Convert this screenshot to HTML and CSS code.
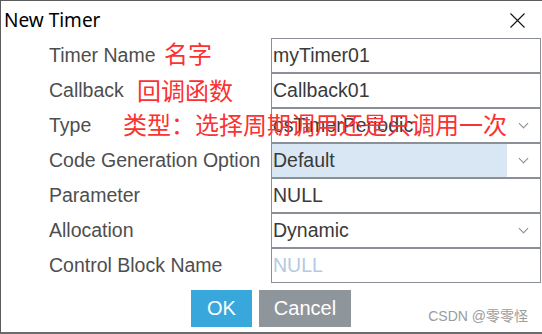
FILE: index.html
```html
<!DOCTYPE html>
<html lang="en">
  <head>
    <meta charset="UTF-8" />
    <title>New Timer</title>
    <link rel="stylesheet" href="styles.css">
  </head>
  <body>
    <div class="dialog">
      <div class="titlebar">
        <span class="title">New Timer</span>
        <svg class="close" width="15" height="15" viewBox="0 0 15 15">
          <path d="M0.5 0.5 L14.5 14.5 M14.5 0.5 L0.5 14.5" stroke="#111" stroke-width="1.1" fill="none" />
        </svg>
      </div>

      <div class="form">
        <label>Timer Name</label>
        <div class="field">myTimer01</div>

        <label>Callback</label>
        <div class="field">Callback01</div>

        <label>Type</label>
        <div class="field select">
          <span class="value">osTimerPeriodic</span>
          <span class="arrow"></span>
        </div>

        <label>Code Generation Option</label>
        <div class="field select">
          <span class="value selected">Default</span>
          <span class="arrow"></span>
        </div>

        <label>Parameter</label>
        <div class="field">NULL</div>

        <label>Allocation</label>
        <div class="field select">
          <span class="value">Dynamic</span>
          <span class="arrow"></span>
        </div>

        <label>Control Block Name</label>
        <div class="field placeholder">NULL</div>
      </div>

      <div class="actions">
        <button class="btn btn-ok">OK</button>
        <button class="btn btn-cancel">Cancel</button>
      </div>

      <!-- red notes written over the screenshot -->
      <span class="note note-name">名字</span>
      <span class="note note-callback">回调函数</span>
      <span class="note note-type">类型：选择周期调用还是只调用一次</span>

      <span class="watermark">CSDN @零零怪</span>
    </div>
  </body>
</html>
```

FILE: styles.css
```css
* {
  padding: 0;
  margin: 0;
  box-sizing: border-box;
}

html,
body {
  width: 542px;
  height: 334px;
  overflow: hidden;
  background: #ffffff;
}

.dialog {
  position: relative;
  width: 542px;
  height: 334px;
  background: #ffffff;
  border-top: 1px solid #5c5c5c;
  border-left: 1px solid #5c5c5c;
  border-bottom: 2px solid #6b6b6b;
  font-family: "Liberation Sans", Arial, sans-serif;
}

.titlebar {
  height: 37px;
  display: flex;
  align-items: center;
  justify-content: space-between;
  padding: 0 17px 0 3px;
}

.title {
  font-family: "Noto Sans", "Open Sans", sans-serif;
  font-size: 19px;
  color: #000000;
}

.close {
  display: block;
  margin-top: 1px;
}

.form {
  display: grid;
  grid-template-columns: 222px 270px;
  grid-auto-rows: 35px;
  padding-left: 48px;
}

.form label {
  display: flex;
  align-items: center;
  font-size: 19.5px;
  color: #4e4e4e;
  white-space: nowrap;
}

.field {
  display: flex;
  align-items: center;
  border: 1px solid #8a9096;
  padding-left: 1px;
  font-size: 19.5px;
  color: #3a3a3a;
  white-space: nowrap;
}

.select {
  padding-left: 0;
  align-items: stretch;
}

.select .value {
  flex: 1;
  display: flex;
  align-items: center;
  padding-left: 1px;
}

.select .value.selected {
  background: #d9e7f4;
}

.select .arrow {
  width: 33px;
  display: flex;
  align-items: center;
  justify-content: center;
}

.select .arrow::before {
  content: "";
  width: 6px;
  height: 6px;
  border-right: 1px solid #8a8a8a;
  border-bottom: 1px solid #8a8a8a;
  transform: translateY(-2px) rotate(45deg);
}

.placeholder {
  color: #b3cae2;
}

.actions {
  display: flex;
  gap: 7px;
  padding: 7px 0 0 190px;
}

.btn {
  height: 37px;
  border: none;
  color: #ffffff;
  font-family: "Liberation Sans", Arial, sans-serif;
  font-size: 20px;
}

.btn-ok {
  width: 61px;
  background: #38a8dc;
}

.btn-cancel {
  width: 92px;
  background: #8e969c;
}

.note {
  position: absolute;
  font-family: "Noto Sans CJK SC", sans-serif;
  font-size: 24px;
  line-height: 24px;
  color: #fa3232;
  white-space: nowrap;
}

.note-name {
  left: 163px;
  top: 40px;
}

.note-callback {
  left: 136px;
  top: 77px;
}

.note-type {
  left: 122px;
  top: 111px;
}

.watermark {
  position: absolute;
  right: 14px;
  top: 307px;
  font-family: "Liberation Sans", "Noto Sans CJK SC", sans-serif;
  font-size: 14px;
  line-height: 16px;
  color: #9c9c9c;
}
```
